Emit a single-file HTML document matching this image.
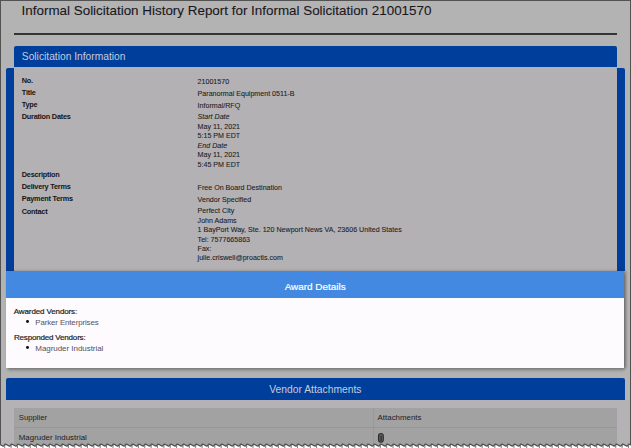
<!DOCTYPE html>
<html><head><meta charset="utf-8"><style>
html,body{margin:0;padding:0}
body{width:631px;height:448px;position:relative;overflow:hidden;background:#b4b3b4;font-family:"Liberation Sans",sans-serif}
.t{position:absolute;white-space:nowrap}
.r{position:absolute}
.frame{position:absolute;left:0;top:0;width:629px;height:444px;border:1px solid #525252;border-bottom:none;pointer-events:none}
</style></head><body>
<div class="r" style="left:14px;top:33px;width:603px;height:2px;background:#343434;"></div>
<div class="r" style="left:14px;top:45.5px;width:603px;height:21.5px;background:#003e9b;border-radius:2px 2px 0 0"></div>
<div class="r" style="left:6px;top:67.5px;width:618.6px;height:203.5px;background:#003e9b;border-radius:2px 2px 0 0"></div>
<div class="r" style="left:14px;top:67px;width:603px;height:204px;background:#b4b1b4;border-radius:0 2px 0 0"></div>
<div class="t" style="left:21.6px;top:1.82px;font-size:13.42px;line-height:17.45px;color:#18181c;font-weight:normal;font-style:normal;letter-spacing:0px;-webkit-text-stroke:0.1px #18181c">Informal Solicitation History Report for Informal Solicitation 21001570</div>
<div class="t" style="left:21.8px;top:50.28px;font-size:10.25px;line-height:13.33px;color:#c6cbdb;font-weight:normal;font-style:normal;letter-spacing:0px;">Solicitation Information</div>
<div class="t" style="left:21.8px;top:76.23px;font-size:7.3px;line-height:9.49px;color:#141414;font-weight:bold;font-style:normal;letter-spacing:-0.22px;">No.</div>
<div class="t" style="left:21.8px;top:88.03px;font-size:7.3px;line-height:9.49px;color:#141414;font-weight:bold;font-style:normal;letter-spacing:-0.22px;">Title</div>
<div class="t" style="left:21.8px;top:100.33px;font-size:7.3px;line-height:9.49px;color:#141414;font-weight:bold;font-style:normal;letter-spacing:-0.22px;">Type</div>
<div class="t" style="left:21.8px;top:112.33px;font-size:7.3px;line-height:9.49px;color:#141414;font-weight:bold;font-style:normal;letter-spacing:-0.22px;">Duration Dates</div>
<div class="t" style="left:21.8px;top:169.93px;font-size:7.3px;line-height:9.49px;color:#141414;font-weight:bold;font-style:normal;letter-spacing:-0.22px;">Description</div>
<div class="t" style="left:21.8px;top:182.03px;font-size:7.3px;line-height:9.49px;color:#141414;font-weight:bold;font-style:normal;letter-spacing:-0.22px;">Delivery Terms</div>
<div class="t" style="left:21.8px;top:194.23px;font-size:7.3px;line-height:9.49px;color:#141414;font-weight:bold;font-style:normal;letter-spacing:-0.22px;">Payment Terms</div>
<div class="t" style="left:21.8px;top:206.63px;font-size:7.3px;line-height:9.49px;color:#141414;font-weight:bold;font-style:normal;letter-spacing:-0.22px;">Contact</div>
<div class="t" style="left:197.6px;top:77.92px;font-size:7.1px;line-height:9.23px;color:#202020;font-weight:normal;font-style:normal;letter-spacing:0px;-webkit-text-stroke:0.08px #202020">21001570</div>
<div class="t" style="left:197.6px;top:89.82px;font-size:7.1px;line-height:9.23px;color:#202020;font-weight:normal;font-style:normal;letter-spacing:0px;-webkit-text-stroke:0.08px #202020">Paranormal Equipment 0511-B</div>
<div class="t" style="left:197.6px;top:102.02px;font-size:7.1px;line-height:9.23px;color:#202020;font-weight:normal;font-style:normal;letter-spacing:0px;-webkit-text-stroke:0.08px #202020">Informal/RFQ</div>
<div class="t" style="left:197.6px;top:113.12px;font-size:7.1px;line-height:9.23px;color:#202020;font-weight:normal;font-style:italic;letter-spacing:0px;-webkit-text-stroke:0.08px #202020">Start Date</div>
<div class="t" style="left:197.6px;top:122.52px;font-size:7.1px;line-height:9.23px;color:#202020;font-weight:normal;font-style:normal;letter-spacing:0px;-webkit-text-stroke:0.08px #202020">May 11, 2021</div>
<div class="t" style="left:197.6px;top:132.12px;font-size:7.1px;line-height:9.23px;color:#202020;font-weight:normal;font-style:normal;letter-spacing:0px;-webkit-text-stroke:0.08px #202020">5:15 PM EDT</div>
<div class="t" style="left:197.6px;top:141.52px;font-size:7.1px;line-height:9.23px;color:#202020;font-weight:normal;font-style:italic;letter-spacing:0px;-webkit-text-stroke:0.08px #202020">End Date</div>
<div class="t" style="left:197.6px;top:150.92px;font-size:7.1px;line-height:9.23px;color:#202020;font-weight:normal;font-style:normal;letter-spacing:0px;-webkit-text-stroke:0.08px #202020">May 11, 2021</div>
<div class="t" style="left:197.6px;top:160.62px;font-size:7.1px;line-height:9.23px;color:#202020;font-weight:normal;font-style:normal;letter-spacing:0px;-webkit-text-stroke:0.08px #202020">5:45 PM EDT</div>
<div class="t" style="left:197.6px;top:183.72px;font-size:7.1px;line-height:9.23px;color:#202020;font-weight:normal;font-style:normal;letter-spacing:0px;-webkit-text-stroke:0.08px #202020">Free On Board Destination</div>
<div class="t" style="left:197.6px;top:195.72px;font-size:7.1px;line-height:9.23px;color:#202020;font-weight:normal;font-style:normal;letter-spacing:0px;-webkit-text-stroke:0.08px #202020">Vendor Specified</div>
<div class="t" style="left:197.6px;top:207.22px;font-size:7.1px;line-height:9.23px;color:#202020;font-weight:normal;font-style:normal;letter-spacing:0px;-webkit-text-stroke:0.08px #202020">Perfect City</div>
<div class="t" style="left:197.6px;top:216.62px;font-size:7.1px;line-height:9.23px;color:#202020;font-weight:normal;font-style:normal;letter-spacing:0px;-webkit-text-stroke:0.08px #202020">John Adams</div>
<div class="t" style="left:197.6px;top:225.62px;font-size:7.1px;line-height:9.23px;color:#202020;font-weight:normal;font-style:normal;letter-spacing:0px;-webkit-text-stroke:0.08px #202020">1 BayPort Way, Ste. 120 Newport News VA, 23606 United States</div>
<div class="t" style="left:197.6px;top:235.72px;font-size:7.1px;line-height:9.23px;color:#202020;font-weight:normal;font-style:normal;letter-spacing:0px;-webkit-text-stroke:0.08px #202020">Tel: 7577665863</div>
<div class="t" style="left:197.6px;top:244.92px;font-size:7.1px;line-height:9.23px;color:#202020;font-weight:normal;font-style:normal;letter-spacing:0px;-webkit-text-stroke:0.08px #202020">Fax:</div>
<div class="t" style="left:197.6px;top:254.32px;font-size:7.1px;line-height:9.23px;color:#202020;font-weight:normal;font-style:normal;letter-spacing:0px;-webkit-text-stroke:0.08px #202020">julie.criswell@proactis.com</div>
<div class="r" style="left:6px;top:271px;width:618px;height:96.60000000000002px;background:#fdfbfe;box-shadow:1.5px 0 2.5px rgba(0,0,0,0.3), 0.5px 2.5px 3px rgba(0,0,0,0.23)"></div>
<div class="r" style="left:6px;top:271px;width:618px;height:26.600000000000023px;background:#4388e1;"></div>
<div class="t" style="left:15.199999999999989px;width:600px;text-align:center;top:281.19px;font-size:9.95px;line-height:12.93px;color:#ffffff;font-weight:normal;font-style:normal;letter-spacing:0px;-webkit-text-stroke:0.2px #fff">Award Details</div>
<div class="t" style="left:13.8px;top:306.83px;font-size:8.0px;line-height:10.4px;color:#1c1c1c;font-weight:normal;font-style:normal;letter-spacing:-0.12px;-webkit-text-stroke:0.2px #1c1c1c">Awarded Vendors:</div>
<div class="t" style="left:35.3px;top:317.53px;font-size:7.9px;line-height:10.27px;color:#55515f;font-weight:normal;font-style:normal;letter-spacing:-0.12px;">Parker Enterprises</div>
<div class="r" style="left:26.3px;top:319.9px;width:2.8000000000000007px;height:2.8000000000000114px;background:#111;border-radius:50%"></div>
<div class="t" style="left:14.0px;top:333.33px;font-size:8.0px;line-height:10.4px;color:#1c1c1c;font-weight:normal;font-style:normal;letter-spacing:-0.18px;-webkit-text-stroke:0.2px #1c1c1c">Responded Vendors:</div>
<div class="t" style="left:35.3px;top:343.63px;font-size:8.0px;line-height:10.4px;color:#55515f;font-weight:normal;font-style:normal;letter-spacing:-0.05px;">Magruder Industrial</div>
<div class="r" style="left:26.3px;top:346.0px;width:2.8000000000000007px;height:2.8000000000000114px;background:#111;border-radius:50%"></div>
<div class="r" style="left:6px;top:378.3px;width:619px;height:69.69999999999999px;background:#b5b2b5;"></div>
<div class="r" style="left:6px;top:378.3px;width:619px;height:21.30000000000001px;background:#003e9b;border-radius:2px 2px 0 0"></div>
<div class="t" style="left:15.399999999999977px;width:600px;text-align:center;top:383.24px;font-size:10.3px;line-height:13.39px;color:#c6cbdb;font-weight:normal;font-style:normal;letter-spacing:0px;">Vendor Attachments</div>
<div class="r" style="left:14px;top:407.6px;width:603px;height:40.39999999999998px;background:#a2a2a3;"></div>
<div class="r" style="left:14px;top:427.4px;width:603px;height:1.0px;background:#989798;"></div>
<div class="r" style="left:373px;top:407.6px;width:1px;height:40.39999999999998px;background:#9a999a;"></div>
<div class="t" style="left:18.8px;top:413.33px;font-size:7.7px;line-height:10.01px;color:#1c1c1c;font-weight:normal;font-style:normal;letter-spacing:0px;">Supplier</div>
<div class="t" style="left:377.6px;top:413.13px;font-size:7.9px;line-height:10.27px;color:#1c1c1c;font-weight:normal;font-style:normal;letter-spacing:0px;">Attachments</div>
<div class="t" style="left:18.8px;top:433.43px;font-size:7.9px;line-height:10.27px;color:#1c1c1c;font-weight:normal;font-style:normal;letter-spacing:0px;">Magruder Industrial</div>
<svg class="r" style="left:377px;top:432px" width="9" height="12" viewBox="0 0 9 12"><path d="M1.5 3.85 a2.4 2.4 0 0 1 4.8 0 V7.75 a2.4 2.4 0 0 1 -4.8 0 Z" fill="#3c3c3c" fill-opacity="0.55" stroke="#2b2b2b" stroke-width="1.1"/><path d="M3.2 3.2 V8.3 a0.7 0.7 0 0 0 1.4 0 V3.6" fill="none" stroke="#2a2a2a" stroke-width="0.8"/></svg>
<svg class="r" style="left:0;top:440px" width="631" height="8" viewBox="0 0 631 8"><path d="M-7.63 8 L-7.63 4.2 C-6.13 4.2 -4.23 6.2 -3.13 6.2 C-2.33 6.2 -1.83 4.2 -1.27 4.2 C0.23 4.2 2.13 6.2 3.23 6.2 C4.03 6.2 4.53 4.2 5.10 4.2 C6.60 4.2 8.50 6.2 9.60 6.2 C10.40 6.2 10.90 4.2 11.46 4.2 C12.96 4.2 14.87 6.2 15.96 6.2 C16.77 6.2 17.27 4.2 17.83 4.2 C19.33 4.2 21.23 6.2 22.33 6.2 C23.13 6.2 23.63 4.2 24.20 4.2 C25.70 4.2 27.59 6.2 28.70 6.2 C29.50 6.2 30.00 4.2 30.56 4.2 C32.06 4.2 33.96 6.2 35.06 6.2 C35.86 6.2 36.36 4.2 36.93 4.2 C38.43 4.2 40.33 6.2 41.43 6.2 C42.23 6.2 42.73 4.2 43.29 4.2 C44.79 4.2 46.69 6.2 47.79 6.2 C48.59 6.2 49.09 4.2 49.66 4.2 C51.16 4.2 53.06 6.2 54.16 6.2 C54.96 6.2 55.46 4.2 56.02 4.2 C57.52 4.2 59.42 6.2 60.52 6.2 C61.32 6.2 61.82 4.2 62.39 4.2 C63.89 4.2 65.79 6.2 66.89 6.2 C67.69 6.2 68.19 4.2 68.75 4.2 C70.25 4.2 72.15 6.2 73.25 6.2 C74.05 6.2 74.55 4.2 75.12 4.2 C76.62 4.2 78.52 6.2 79.62 6.2 C80.42 6.2 80.92 4.2 81.48 4.2 C82.98 4.2 84.88 6.2 85.98 6.2 C86.78 6.2 87.28 4.2 87.84 4.2 C89.34 4.2 91.25 6.2 92.34 6.2 C93.14 6.2 93.64 4.2 94.21 4.2 C95.71 4.2 97.61 6.2 98.71 6.2 C99.51 6.2 100.01 4.2 100.57 4.2 C102.07 4.2 103.97 6.2 105.07 6.2 C105.87 6.2 106.37 4.2 106.94 4.2 C108.44 4.2 110.34 6.2 111.44 6.2 C112.24 6.2 112.74 4.2 113.30 4.2 C114.80 4.2 116.70 6.2 117.80 6.2 C118.60 6.2 119.10 4.2 119.67 4.2 C121.17 4.2 123.07 6.2 124.17 6.2 C124.97 6.2 125.47 4.2 126.03 4.2 C127.53 4.2 129.43 6.2 130.53 6.2 C131.33 6.2 131.83 4.2 132.40 4.2 C133.90 4.2 135.80 6.2 136.90 6.2 C137.70 6.2 138.20 4.2 138.76 4.2 C140.26 4.2 142.16 6.2 143.26 6.2 C144.06 6.2 144.56 4.2 145.13 4.2 C146.63 4.2 148.53 6.2 149.63 6.2 C150.43 6.2 150.93 4.2 151.50 4.2 C153.00 4.2 154.90 6.2 156.00 6.2 C156.80 6.2 157.30 4.2 157.86 4.2 C159.36 4.2 161.26 6.2 162.36 6.2 C163.16 6.2 163.66 4.2 164.23 4.2 C165.73 4.2 167.63 6.2 168.73 6.2 C169.53 6.2 170.03 4.2 170.59 4.2 C172.09 4.2 173.99 6.2 175.09 6.2 C175.89 6.2 176.39 4.2 176.96 4.2 C178.46 4.2 180.36 6.2 181.46 6.2 C182.26 6.2 182.76 4.2 183.32 4.2 C184.82 4.2 186.72 6.2 187.82 6.2 C188.62 6.2 189.12 4.2 189.69 4.2 C191.19 4.2 193.09 6.2 194.19 6.2 C194.99 6.2 195.49 4.2 196.05 4.2 C197.55 4.2 199.45 6.2 200.55 6.2 C201.35 6.2 201.85 4.2 202.42 4.2 C203.92 4.2 205.82 6.2 206.92 6.2 C207.72 6.2 208.22 4.2 208.78 4.2 C210.28 4.2 212.18 6.2 213.28 6.2 C214.08 6.2 214.58 4.2 215.15 4.2 C216.65 4.2 218.55 6.2 219.65 6.2 C220.45 6.2 220.95 4.2 221.51 4.2 C223.01 4.2 224.91 6.2 226.01 6.2 C226.81 6.2 227.31 4.2 227.88 4.2 C229.38 4.2 231.28 6.2 232.38 6.2 C233.18 6.2 233.68 4.2 234.24 4.2 C235.74 4.2 237.64 6.2 238.74 6.2 C239.54 6.2 240.04 4.2 240.61 4.2 C242.11 4.2 244.01 6.2 245.11 6.2 C245.91 6.2 246.41 4.2 246.97 4.2 C248.47 4.2 250.37 6.2 251.47 6.2 C252.27 6.2 252.77 4.2 253.34 4.2 C254.84 4.2 256.74 6.2 257.84 6.2 C258.64 6.2 259.14 4.2 259.70 4.2 C261.20 4.2 263.10 6.2 264.20 6.2 C265.00 6.2 265.50 4.2 266.07 4.2 C267.57 4.2 269.47 6.2 270.57 6.2 C271.37 6.2 271.87 4.2 272.43 4.2 C273.93 4.2 275.83 6.2 276.93 6.2 C277.73 6.2 278.23 4.2 278.80 4.2 C280.30 4.2 282.20 6.2 283.30 6.2 C284.10 6.2 284.60 4.2 285.16 4.2 C286.66 4.2 288.56 6.2 289.66 6.2 C290.46 6.2 290.96 4.2 291.53 4.2 C293.03 4.2 294.93 6.2 296.03 6.2 C296.83 6.2 297.33 4.2 297.89 4.2 C299.39 4.2 301.29 6.2 302.39 6.2 C303.19 6.2 303.69 4.2 304.26 4.2 C305.76 4.2 307.66 6.2 308.76 6.2 C309.56 6.2 310.06 4.2 310.62 4.2 C312.12 4.2 314.02 6.2 315.12 6.2 C315.92 6.2 316.42 4.2 316.99 4.2 C318.49 4.2 320.39 6.2 321.49 6.2 C322.29 6.2 322.79 4.2 323.35 4.2 C324.85 4.2 326.75 6.2 327.85 6.2 C328.65 6.2 329.15 4.2 329.72 4.2 C331.22 4.2 333.12 6.2 334.22 6.2 C335.02 6.2 335.52 4.2 336.08 4.2 C337.58 4.2 339.48 6.2 340.58 6.2 C341.38 6.2 341.88 4.2 342.45 4.2 C343.95 4.2 345.85 6.2 346.95 6.2 C347.75 6.2 348.25 4.2 348.81 4.2 C350.31 4.2 352.21 6.2 353.31 6.2 C354.11 6.2 354.61 4.2 355.18 4.2 C356.68 4.2 358.58 6.2 359.68 6.2 C360.48 6.2 360.98 4.2 361.54 4.2 C363.04 4.2 364.94 6.2 366.04 6.2 C366.84 6.2 367.34 4.2 367.91 4.2 C369.41 4.2 371.31 6.2 372.41 6.2 C373.21 6.2 373.71 4.2 374.27 4.2 C375.77 4.2 377.67 6.2 378.77 6.2 C379.57 6.2 380.07 4.2 380.64 4.2 C382.14 4.2 384.04 6.2 385.14 6.2 C385.94 6.2 386.44 4.2 387.00 4.2 C388.50 4.2 390.40 6.2 391.50 6.2 C392.30 6.2 392.80 4.2 393.37 4.2 C394.87 4.2 396.77 6.2 397.87 6.2 C398.67 6.2 399.17 4.2 399.73 4.2 C401.23 4.2 403.13 6.2 404.23 6.2 C405.03 6.2 405.53 4.2 406.10 4.2 C407.60 4.2 409.50 6.2 410.60 6.2 C411.40 6.2 411.90 4.2 412.46 4.2 C413.96 4.2 415.86 6.2 416.96 6.2 C417.76 6.2 418.26 4.2 418.83 4.2 C420.33 4.2 422.23 6.2 423.33 6.2 C424.13 6.2 424.63 4.2 425.19 4.2 C426.69 4.2 428.59 6.2 429.69 6.2 C430.49 6.2 430.99 4.2 431.56 4.2 C433.06 4.2 434.96 6.2 436.06 6.2 C436.86 6.2 437.36 4.2 437.92 4.2 C439.42 4.2 441.32 6.2 442.42 6.2 C443.22 6.2 443.72 4.2 444.29 4.2 C445.79 4.2 447.69 6.2 448.79 6.2 C449.59 6.2 450.09 4.2 450.65 4.2 C452.15 4.2 454.05 6.2 455.15 6.2 C455.95 6.2 456.45 4.2 457.02 4.2 C458.52 4.2 460.42 6.2 461.52 6.2 C462.32 6.2 462.82 4.2 463.38 4.2 C464.88 4.2 466.78 6.2 467.88 6.2 C468.68 6.2 469.18 4.2 469.75 4.2 C471.25 4.2 473.15 6.2 474.25 6.2 C475.05 6.2 475.55 4.2 476.11 4.2 C477.61 4.2 479.51 6.2 480.61 6.2 C481.41 6.2 481.91 4.2 482.48 4.2 C483.98 4.2 485.88 6.2 486.98 6.2 C487.78 6.2 488.28 4.2 488.84 4.2 C490.34 4.2 492.24 6.2 493.34 6.2 C494.14 6.2 494.64 4.2 495.21 4.2 C496.71 4.2 498.61 6.2 499.71 6.2 C500.51 6.2 501.01 4.2 501.57 4.2 C503.07 4.2 504.97 6.2 506.07 6.2 C506.87 6.2 507.37 4.2 507.94 4.2 C509.44 4.2 511.34 6.2 512.44 6.2 C513.24 6.2 513.74 4.2 514.30 4.2 C515.80 4.2 517.70 6.2 518.80 6.2 C519.60 6.2 520.10 4.2 520.67 4.2 C522.17 4.2 524.07 6.2 525.17 6.2 C525.97 6.2 526.47 4.2 527.03 4.2 C528.53 4.2 530.43 6.2 531.53 6.2 C532.33 6.2 532.83 4.2 533.40 4.2 C534.90 4.2 536.80 6.2 537.90 6.2 C538.70 6.2 539.20 4.2 539.76 4.2 C541.26 4.2 543.16 6.2 544.26 6.2 C545.06 6.2 545.56 4.2 546.13 4.2 C547.63 4.2 549.53 6.2 550.63 6.2 C551.43 6.2 551.93 4.2 552.49 4.2 C553.99 4.2 555.89 6.2 556.99 6.2 C557.79 6.2 558.29 4.2 558.86 4.2 C560.36 4.2 562.26 6.2 563.36 6.2 C564.16 6.2 564.66 4.2 565.22 4.2 C566.72 4.2 568.62 6.2 569.72 6.2 C570.52 6.2 571.02 4.2 571.59 4.2 C573.09 4.2 574.99 6.2 576.09 6.2 C576.89 6.2 577.39 4.2 577.95 4.2 C579.45 4.2 581.35 6.2 582.45 6.2 C583.25 6.2 583.75 4.2 584.32 4.2 C585.82 4.2 587.72 6.2 588.82 6.2 C589.62 6.2 590.12 4.2 590.68 4.2 C592.18 4.2 594.08 6.2 595.18 6.2 C595.98 6.2 596.48 4.2 597.05 4.2 C598.55 4.2 600.45 6.2 601.55 6.2 C602.35 6.2 602.85 4.2 603.41 4.2 C604.91 4.2 606.81 6.2 607.91 6.2 C608.71 6.2 609.21 4.2 609.78 4.2 C611.28 4.2 613.18 6.2 614.28 6.2 C615.08 6.2 615.58 4.2 616.14 4.2 C617.64 4.2 619.54 6.2 620.64 6.2 C621.44 6.2 621.94 4.2 622.51 4.2 C624.01 4.2 625.91 6.2 627.01 6.2 C627.81 6.2 628.31 4.2 628.87 4.2 C630.37 4.2 632.27 6.2 633.37 6.2 C634.17 6.2 634.67 4.2 635.24 4.2 C636.74 4.2 638.64 6.2 639.74 6.2 C640.54 6.2 641.04 4.2 641.60 4.2 L641.60 8 Z" fill="#ffffff"/><path d="M-7.63 4.2 C-6.13 4.2 -4.23 6.2 -3.13 6.2 C-2.33 6.2 -1.83 4.2 -1.27 4.2 C0.23 4.2 2.13 6.2 3.23 6.2 C4.03 6.2 4.53 4.2 5.10 4.2 C6.60 4.2 8.50 6.2 9.60 6.2 C10.40 6.2 10.90 4.2 11.46 4.2 C12.96 4.2 14.87 6.2 15.96 6.2 C16.77 6.2 17.27 4.2 17.83 4.2 C19.33 4.2 21.23 6.2 22.33 6.2 C23.13 6.2 23.63 4.2 24.20 4.2 C25.70 4.2 27.59 6.2 28.70 6.2 C29.50 6.2 30.00 4.2 30.56 4.2 C32.06 4.2 33.96 6.2 35.06 6.2 C35.86 6.2 36.36 4.2 36.93 4.2 C38.43 4.2 40.33 6.2 41.43 6.2 C42.23 6.2 42.73 4.2 43.29 4.2 C44.79 4.2 46.69 6.2 47.79 6.2 C48.59 6.2 49.09 4.2 49.66 4.2 C51.16 4.2 53.06 6.2 54.16 6.2 C54.96 6.2 55.46 4.2 56.02 4.2 C57.52 4.2 59.42 6.2 60.52 6.2 C61.32 6.2 61.82 4.2 62.39 4.2 C63.89 4.2 65.79 6.2 66.89 6.2 C67.69 6.2 68.19 4.2 68.75 4.2 C70.25 4.2 72.15 6.2 73.25 6.2 C74.05 6.2 74.55 4.2 75.12 4.2 C76.62 4.2 78.52 6.2 79.62 6.2 C80.42 6.2 80.92 4.2 81.48 4.2 C82.98 4.2 84.88 6.2 85.98 6.2 C86.78 6.2 87.28 4.2 87.84 4.2 C89.34 4.2 91.25 6.2 92.34 6.2 C93.14 6.2 93.64 4.2 94.21 4.2 C95.71 4.2 97.61 6.2 98.71 6.2 C99.51 6.2 100.01 4.2 100.57 4.2 C102.07 4.2 103.97 6.2 105.07 6.2 C105.87 6.2 106.37 4.2 106.94 4.2 C108.44 4.2 110.34 6.2 111.44 6.2 C112.24 6.2 112.74 4.2 113.30 4.2 C114.80 4.2 116.70 6.2 117.80 6.2 C118.60 6.2 119.10 4.2 119.67 4.2 C121.17 4.2 123.07 6.2 124.17 6.2 C124.97 6.2 125.47 4.2 126.03 4.2 C127.53 4.2 129.43 6.2 130.53 6.2 C131.33 6.2 131.83 4.2 132.40 4.2 C133.90 4.2 135.80 6.2 136.90 6.2 C137.70 6.2 138.20 4.2 138.76 4.2 C140.26 4.2 142.16 6.2 143.26 6.2 C144.06 6.2 144.56 4.2 145.13 4.2 C146.63 4.2 148.53 6.2 149.63 6.2 C150.43 6.2 150.93 4.2 151.50 4.2 C153.00 4.2 154.90 6.2 156.00 6.2 C156.80 6.2 157.30 4.2 157.86 4.2 C159.36 4.2 161.26 6.2 162.36 6.2 C163.16 6.2 163.66 4.2 164.23 4.2 C165.73 4.2 167.63 6.2 168.73 6.2 C169.53 6.2 170.03 4.2 170.59 4.2 C172.09 4.2 173.99 6.2 175.09 6.2 C175.89 6.2 176.39 4.2 176.96 4.2 C178.46 4.2 180.36 6.2 181.46 6.2 C182.26 6.2 182.76 4.2 183.32 4.2 C184.82 4.2 186.72 6.2 187.82 6.2 C188.62 6.2 189.12 4.2 189.69 4.2 C191.19 4.2 193.09 6.2 194.19 6.2 C194.99 6.2 195.49 4.2 196.05 4.2 C197.55 4.2 199.45 6.2 200.55 6.2 C201.35 6.2 201.85 4.2 202.42 4.2 C203.92 4.2 205.82 6.2 206.92 6.2 C207.72 6.2 208.22 4.2 208.78 4.2 C210.28 4.2 212.18 6.2 213.28 6.2 C214.08 6.2 214.58 4.2 215.15 4.2 C216.65 4.2 218.55 6.2 219.65 6.2 C220.45 6.2 220.95 4.2 221.51 4.2 C223.01 4.2 224.91 6.2 226.01 6.2 C226.81 6.2 227.31 4.2 227.88 4.2 C229.38 4.2 231.28 6.2 232.38 6.2 C233.18 6.2 233.68 4.2 234.24 4.2 C235.74 4.2 237.64 6.2 238.74 6.2 C239.54 6.2 240.04 4.2 240.61 4.2 C242.11 4.2 244.01 6.2 245.11 6.2 C245.91 6.2 246.41 4.2 246.97 4.2 C248.47 4.2 250.37 6.2 251.47 6.2 C252.27 6.2 252.77 4.2 253.34 4.2 C254.84 4.2 256.74 6.2 257.84 6.2 C258.64 6.2 259.14 4.2 259.70 4.2 C261.20 4.2 263.10 6.2 264.20 6.2 C265.00 6.2 265.50 4.2 266.07 4.2 C267.57 4.2 269.47 6.2 270.57 6.2 C271.37 6.2 271.87 4.2 272.43 4.2 C273.93 4.2 275.83 6.2 276.93 6.2 C277.73 6.2 278.23 4.2 278.80 4.2 C280.30 4.2 282.20 6.2 283.30 6.2 C284.10 6.2 284.60 4.2 285.16 4.2 C286.66 4.2 288.56 6.2 289.66 6.2 C290.46 6.2 290.96 4.2 291.53 4.2 C293.03 4.2 294.93 6.2 296.03 6.2 C296.83 6.2 297.33 4.2 297.89 4.2 C299.39 4.2 301.29 6.2 302.39 6.2 C303.19 6.2 303.69 4.2 304.26 4.2 C305.76 4.2 307.66 6.2 308.76 6.2 C309.56 6.2 310.06 4.2 310.62 4.2 C312.12 4.2 314.02 6.2 315.12 6.2 C315.92 6.2 316.42 4.2 316.99 4.2 C318.49 4.2 320.39 6.2 321.49 6.2 C322.29 6.2 322.79 4.2 323.35 4.2 C324.85 4.2 326.75 6.2 327.85 6.2 C328.65 6.2 329.15 4.2 329.72 4.2 C331.22 4.2 333.12 6.2 334.22 6.2 C335.02 6.2 335.52 4.2 336.08 4.2 C337.58 4.2 339.48 6.2 340.58 6.2 C341.38 6.2 341.88 4.2 342.45 4.2 C343.95 4.2 345.85 6.2 346.95 6.2 C347.75 6.2 348.25 4.2 348.81 4.2 C350.31 4.2 352.21 6.2 353.31 6.2 C354.11 6.2 354.61 4.2 355.18 4.2 C356.68 4.2 358.58 6.2 359.68 6.2 C360.48 6.2 360.98 4.2 361.54 4.2 C363.04 4.2 364.94 6.2 366.04 6.2 C366.84 6.2 367.34 4.2 367.91 4.2 C369.41 4.2 371.31 6.2 372.41 6.2 C373.21 6.2 373.71 4.2 374.27 4.2 C375.77 4.2 377.67 6.2 378.77 6.2 C379.57 6.2 380.07 4.2 380.64 4.2 C382.14 4.2 384.04 6.2 385.14 6.2 C385.94 6.2 386.44 4.2 387.00 4.2 C388.50 4.2 390.40 6.2 391.50 6.2 C392.30 6.2 392.80 4.2 393.37 4.2 C394.87 4.2 396.77 6.2 397.87 6.2 C398.67 6.2 399.17 4.2 399.73 4.2 C401.23 4.2 403.13 6.2 404.23 6.2 C405.03 6.2 405.53 4.2 406.10 4.2 C407.60 4.2 409.50 6.2 410.60 6.2 C411.40 6.2 411.90 4.2 412.46 4.2 C413.96 4.2 415.86 6.2 416.96 6.2 C417.76 6.2 418.26 4.2 418.83 4.2 C420.33 4.2 422.23 6.2 423.33 6.2 C424.13 6.2 424.63 4.2 425.19 4.2 C426.69 4.2 428.59 6.2 429.69 6.2 C430.49 6.2 430.99 4.2 431.56 4.2 C433.06 4.2 434.96 6.2 436.06 6.2 C436.86 6.2 437.36 4.2 437.92 4.2 C439.42 4.2 441.32 6.2 442.42 6.2 C443.22 6.2 443.72 4.2 444.29 4.2 C445.79 4.2 447.69 6.2 448.79 6.2 C449.59 6.2 450.09 4.2 450.65 4.2 C452.15 4.2 454.05 6.2 455.15 6.2 C455.95 6.2 456.45 4.2 457.02 4.2 C458.52 4.2 460.42 6.2 461.52 6.2 C462.32 6.2 462.82 4.2 463.38 4.2 C464.88 4.2 466.78 6.2 467.88 6.2 C468.68 6.2 469.18 4.2 469.75 4.2 C471.25 4.2 473.15 6.2 474.25 6.2 C475.05 6.2 475.55 4.2 476.11 4.2 C477.61 4.2 479.51 6.2 480.61 6.2 C481.41 6.2 481.91 4.2 482.48 4.2 C483.98 4.2 485.88 6.2 486.98 6.2 C487.78 6.2 488.28 4.2 488.84 4.2 C490.34 4.2 492.24 6.2 493.34 6.2 C494.14 6.2 494.64 4.2 495.21 4.2 C496.71 4.2 498.61 6.2 499.71 6.2 C500.51 6.2 501.01 4.2 501.57 4.2 C503.07 4.2 504.97 6.2 506.07 6.2 C506.87 6.2 507.37 4.2 507.94 4.2 C509.44 4.2 511.34 6.2 512.44 6.2 C513.24 6.2 513.74 4.2 514.30 4.2 C515.80 4.2 517.70 6.2 518.80 6.2 C519.60 6.2 520.10 4.2 520.67 4.2 C522.17 4.2 524.07 6.2 525.17 6.2 C525.97 6.2 526.47 4.2 527.03 4.2 C528.53 4.2 530.43 6.2 531.53 6.2 C532.33 6.2 532.83 4.2 533.40 4.2 C534.90 4.2 536.80 6.2 537.90 6.2 C538.70 6.2 539.20 4.2 539.76 4.2 C541.26 4.2 543.16 6.2 544.26 6.2 C545.06 6.2 545.56 4.2 546.13 4.2 C547.63 4.2 549.53 6.2 550.63 6.2 C551.43 6.2 551.93 4.2 552.49 4.2 C553.99 4.2 555.89 6.2 556.99 6.2 C557.79 6.2 558.29 4.2 558.86 4.2 C560.36 4.2 562.26 6.2 563.36 6.2 C564.16 6.2 564.66 4.2 565.22 4.2 C566.72 4.2 568.62 6.2 569.72 6.2 C570.52 6.2 571.02 4.2 571.59 4.2 C573.09 4.2 574.99 6.2 576.09 6.2 C576.89 6.2 577.39 4.2 577.95 4.2 C579.45 4.2 581.35 6.2 582.45 6.2 C583.25 6.2 583.75 4.2 584.32 4.2 C585.82 4.2 587.72 6.2 588.82 6.2 C589.62 6.2 590.12 4.2 590.68 4.2 C592.18 4.2 594.08 6.2 595.18 6.2 C595.98 6.2 596.48 4.2 597.05 4.2 C598.55 4.2 600.45 6.2 601.55 6.2 C602.35 6.2 602.85 4.2 603.41 4.2 C604.91 4.2 606.81 6.2 607.91 6.2 C608.71 6.2 609.21 4.2 609.78 4.2 C611.28 4.2 613.18 6.2 614.28 6.2 C615.08 6.2 615.58 4.2 616.14 4.2 C617.64 4.2 619.54 6.2 620.64 6.2 C621.44 6.2 621.94 4.2 622.51 4.2 C624.01 4.2 625.91 6.2 627.01 6.2 C627.81 6.2 628.31 4.2 628.87 4.2 C630.37 4.2 632.27 6.2 633.37 6.2 C634.17 6.2 634.67 4.2 635.24 4.2 C636.74 4.2 638.64 6.2 639.74 6.2 C640.54 6.2 641.04 4.2 641.60 4.2 " fill="none" stroke="#4e4e4e" stroke-width="1.25"/><path d="M-7.83 4.6 L-8.03 8 M-1.47 4.6 L-1.67 8 M4.90 4.6 L4.70 8 M11.27 4.6 L11.06 8 M17.63 4.6 L17.43 8 M24.00 4.6 L23.80 8 M30.36 4.6 L30.16 8 M36.73 4.6 L36.53 8 M43.09 4.6 L42.89 8 M49.46 4.6 L49.26 8 M55.82 4.6 L55.62 8 M62.19 4.6 L61.99 8 M68.55 4.6 L68.35 8 M74.92 4.6 L74.72 8 M81.28 4.6 L81.08 8 M87.64 4.6 L87.44 8 M94.01 4.6 L93.81 8 M100.37 4.6 L100.17 8 M106.74 4.6 L106.54 8 M113.10 4.6 L112.90 8 M119.47 4.6 L119.27 8 M125.83 4.6 L125.63 8 M132.20 4.6 L132.00 8 M138.56 4.6 L138.36 8 M144.93 4.6 L144.73 8 M151.30 4.6 L151.09 8 M157.66 4.6 L157.46 8 M164.03 4.6 L163.83 8 M170.39 4.6 L170.19 8 M176.76 4.6 L176.56 8 M183.12 4.6 L182.92 8 M189.49 4.6 L189.29 8 M195.85 4.6 L195.65 8 M202.22 4.6 L202.02 8 M208.58 4.6 L208.38 8 M214.95 4.6 L214.75 8 M221.31 4.6 L221.11 8 M227.68 4.6 L227.48 8 M234.04 4.6 L233.84 8 M240.41 4.6 L240.21 8 M246.77 4.6 L246.57 8 M253.14 4.6 L252.94 8 M259.50 4.6 L259.30 8 M265.87 4.6 L265.67 8 M272.23 4.6 L272.03 8 M278.60 4.6 L278.40 8 M284.96 4.6 L284.76 8 M291.33 4.6 L291.13 8 M297.69 4.6 L297.49 8 M304.06 4.6 L303.86 8 M310.42 4.6 L310.22 8 M316.79 4.6 L316.59 8 M323.15 4.6 L322.95 8 M329.52 4.6 L329.32 8 M335.88 4.6 L335.68 8 M342.25 4.6 L342.05 8 M348.61 4.6 L348.41 8 M354.98 4.6 L354.78 8 M361.34 4.6 L361.14 8 M367.71 4.6 L367.51 8 M374.07 4.6 L373.87 8 M380.44 4.6 L380.24 8 M386.80 4.6 L386.60 8 M393.17 4.6 L392.97 8 M399.53 4.6 L399.33 8 M405.90 4.6 L405.70 8 M412.26 4.6 L412.06 8 M418.63 4.6 L418.43 8 M424.99 4.6 L424.79 8 M431.36 4.6 L431.16 8 M437.72 4.6 L437.52 8 M444.09 4.6 L443.89 8 M450.45 4.6 L450.25 8 M456.82 4.6 L456.62 8 M463.18 4.6 L462.98 8 M469.55 4.6 L469.35 8 M475.91 4.6 L475.71 8 M482.28 4.6 L482.08 8 M488.64 4.6 L488.44 8 M495.01 4.6 L494.81 8 M501.37 4.6 L501.17 8 M507.74 4.6 L507.54 8 M514.10 4.6 L513.90 8 M520.47 4.6 L520.27 8 M526.83 4.6 L526.63 8 M533.20 4.6 L533.00 8 M539.56 4.6 L539.36 8 M545.93 4.6 L545.73 8 M552.29 4.6 L552.09 8 M558.66 4.6 L558.46 8 M565.02 4.6 L564.82 8 M571.39 4.6 L571.19 8 M577.75 4.6 L577.55 8 M584.12 4.6 L583.92 8 M590.48 4.6 L590.28 8 M596.85 4.6 L596.65 8 M603.21 4.6 L603.01 8 M609.58 4.6 L609.38 8 M615.94 4.6 L615.74 8 M622.31 4.6 L622.11 8 M628.67 4.6 L628.47 8 M635.04 4.6 L634.84 8 " fill="none" stroke="#6e6e6e" stroke-width="0.9"/></svg>
<div class="frame"></div>
</body></html>
